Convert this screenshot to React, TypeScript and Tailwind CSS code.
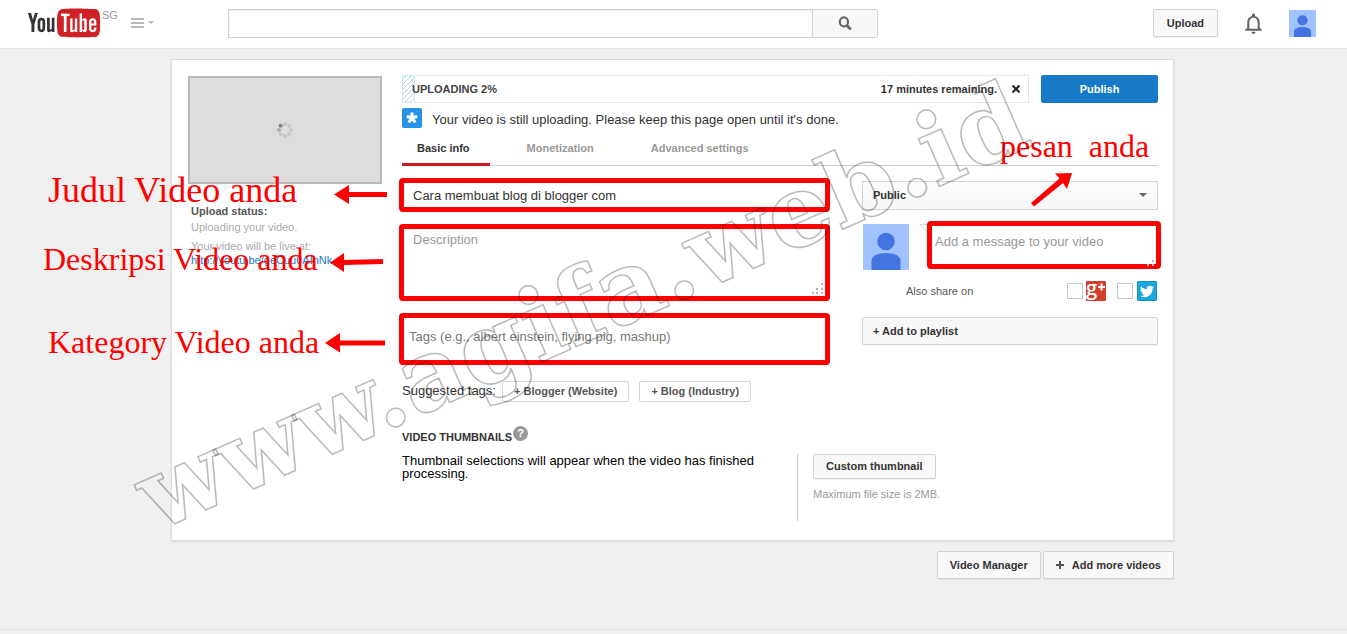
import { useState } from 'react';
import type { ReactNode } from 'react';
import { clsx } from 'clsx';
import { ImTwitter, ImYoutube2 } from 'react-icons/im';
import { MdNotificationsNone } from 'react-icons/md';

const TABS = ['Basic info', 'Monetization', 'Advanced settings'];
const SUGGESTED_TAGS = ['Blogger (Website)', 'Blog (Industry)'];

const marked =
  'outline-[5px] outline-solid outline-[#ff0000] -outline-offset-2 rounded-[1px]';

function Button({ className, children }: { className?: string; children: ReactNode }) {
  return (
    <button
      type="button"
      className={clsx(
        'flex items-center rounded-[2px] border border-[#d3d3d3] bg-[#f8f8f8]',
        'text-[11px] font-bold text-[#333] shadow-[0_1px_0_rgba(0,0,0,0.05)]',
        className,
      )}>
      {children}
    </button>
  );
}

function Avatar({ className }: { className?: string }) {
  return (
    <svg viewBox="0 0 46 46" className={className} preserveAspectRatio="none" aria-label="Avatar">
      <rect width="46" height="46" fill="#a0c2ff" />
      <circle cx="23" cy="17.500" r="8.700" fill="#4374e0" />
      <path d="M8.500 46V37c0-5.500 6.500-8 14.500-8s14.500 2.500 14.500 8v9z" fill="#4374e0" />
    </svg>
  );
}

function Grip({ small }: { small?: boolean }) {
  return (
    <svg
      viewBox="0 0 12 12"
      className="pointer-events-none absolute right-[3px] bottom-[3px] size-3"
      fill="#b5b5b5">
      {!small && (
        <>
          <rect x="9" y="0" width="2" height="2" />
          <rect x="0" y="9" width="2" height="2" />
          <rect x="4" y="5" width="2" height="2" />
        </>
      )}
      <rect x="9" y="5" width="2" height="2" />
      <rect x="4" y="9" width="2" height="2" />
      <rect x="9" y="9" width="2" height="2" />
    </svg>
  );
}

function Spinner() {
  const dots = [0, 1, 2, 3, 4, 5, 6, 7];
  return (
    <svg viewBox="-8 -8 16 16" className="size-4">
      {dots.map((i) => {
        const angle = (i * Math.PI) / 4;
        return (
          <circle
            key={i}
            cx={Math.cos(angle) * 6}
            cy={Math.sin(angle) * 6}
            r="2"
            fill={i === 5 ? '#808080' : i === 4 ? '#adadad' : '#c8c8c8'}
          />
        );
      })}
    </svg>
  );
}

function GooglePlus() {
  return (
    <svg viewBox="0 0 20 20" className="mr-[11px] size-5">
      <rect width="20" height="20" rx="1" fill="#d3402d" />
      <text x="0" y="14" fontFamily="'Open Sans', sans-serif" fontSize="20" fontWeight="600" fill="#fff">
        g
      </text>
      <path d="M12 6h7M15.500 2.500v7" stroke="#fff" strokeWidth="2" />
    </svg>
  );
}

function Header() {
  return (
    <header className="flex h-[49px] items-center border-b border-[#e6e6e6] bg-white pr-[31px] pb-[2px]">
      <div className="flex w-[228px] shrink-0 items-center pl-7">
        <a href="#" aria-label="YouTube" className="-my-5 grid">
          <ImYoutube2 className="col-start-1 row-start-1 size-[72px] text-[#333] [clip-path:inset(0_60%_0_0)]" />
          <ImYoutube2 className="col-start-1 row-start-1 size-[72px] text-[#cf2227] [clip-path:inset(0_0_0_40%)]" />
        </a>
        <span className="ml-[2px] self-start pt-[2px] text-[11px] leading-3 text-[#999]">SG</span>
        <button type="button" aria-label="Guide" className="ml-[13px]">
          <svg viewBox="0 0 24 12" className="h-3 w-6" fill="#b8b8b8">
            <path d="M0 1h13v2H0zM0 5h13v2H0zM0 9h13v2H0zM17 4h6l-3 3z" />
          </svg>
        </button>
      </div>

      <form className="flex h-[29px] max-w-[650px] flex-1">
        <input
          type="text"
          aria-label="Search"
          className="min-w-0 flex-1 border border-[#ccc] bg-white px-2 text-[13px] shadow-[inset_0_1px_2px_#eee] outline-none"
        />
        <button
          type="button"
          aria-label="Search"
          className="-ml-px flex w-[66px] items-center justify-center rounded-r-[2px] border border-[#d3d3d3] bg-[#f8f8f8]">
          <svg viewBox="0 0 13 13" className="size-[14px]" fill="none" stroke="#666">
            <ellipse cx="5.500" cy="5.500" rx="3.800" ry="4.200" strokeWidth="2" />
            <path d="M8 8.500l4 4" strokeWidth="2.600" />
          </svg>
        </button>
      </form>

      <div className="ml-auto flex items-center pl-4">
        <Button className="h-7 px-[13px]">Upload</Button>
        <button type="button" aria-label="Notifications" className="mx-[23px]">
          <MdNotificationsNone className="size-[25px] text-[#666]" />
        </button>
        <Avatar className="size-[27px]" />
      </div>
    </header>
  );
}

function UploadStatus() {
  return (
    <aside className="w-[194px] shrink-0 pt-px text-[11px] text-[#aaa]">
      <div className="flex h-[108px] items-center justify-center border-2 border-[#b9b9b9] bg-[#ddd]">
        <Spinner />
      </div>
      <div className="mt-[19px] pl-[3px]">
        <h2 className="leading-4 font-bold text-[#555]">Upload status:</h2>
        <p className="leading-4">Uploading your video.</p>
        <p className="mt-[4px] leading-[14px]">Your video will be live at:</p>
        <a href="#" className="block leading-[14px] text-[#167ac6]">
          http://youtu.be/geCuu0AInNk
        </a>
      </div>
    </aside>
  );
}

function ProgressRow() {
  return (
    <div className="flex h-7 gap-3">
      <div className="flex flex-1 items-center border border-[#e6e6e6] text-[11px] font-bold text-[#333]">
        <svg width="13" height="28" className="-my-px -ml-px shrink-0">
          <defs>
            <pattern id="hatch" width="5" height="5" patternUnits="userSpaceOnUse">
              <path d="M-1 6L6-1" stroke="#a9d5f5" />
            </pattern>
          </defs>
          <rect x="0.500" y="0.500" width="12" height="27" fill="url(#hatch)" stroke="#cfe7fa" />
        </svg>
        <span className="-ml-[3px] text-[#444]">UPLOADING 2%</span>
        <span className="ml-auto">17 minutes remaining.</span>
        <button type="button" aria-label="Cancel upload" className="mr-2 ml-[15px]">
          <svg viewBox="0 0 8 8" className="size-2" stroke="#222" strokeWidth="2">
            <path d="M0.500 0.500l7 7M7.500 0.500l-7 7" />
          </svg>
        </button>
      </div>
      <button
        type="button"
        className="w-[117px] rounded-[2px] bg-[#167ac6] text-[11px] font-bold text-white">
        Publish
      </button>
    </div>
  );
}

function Details() {
  const [title, setTitle] = useState('Cara membuat blog di blogger com');

  return (
    <div className="min-w-0 flex-1">
      <input
        type="text"
        aria-label="Title"
        value={title}
        onChange={(e) => setTitle(e.target.value)}
        className={clsx('block h-7 w-full bg-white px-[11px] text-[13px] text-[#333]', marked)}
      />
      <div className="relative mt-[18px]">
        <textarea
          aria-label="Description"
          placeholder="Description"
          className={clsx(
            'block h-[71px] w-full resize-none bg-white px-[11px] py-[5px] text-[13px] leading-4 placeholder:text-[#999]',
            marked,
          )}
        />
        <Grip />
      </div>
      <input
        type="text"
        aria-label="Tags"
        placeholder="Tags (e.g., albert einstein, flying pig, mashup)"
        className={clsx(
          'mt-[18px] block h-[46px] w-full bg-white px-[7px] pb-[5px] text-[13px] placeholder:text-[#777]',
          marked,
        )}
      />
      <div className="mt-[18px] flex h-[22px] items-center text-[13px] text-[#333]">
        <span className="mr-[6px] whitespace-nowrap">Suggested tags:</span>
        <div className="flex gap-[10px]">
          {SUGGESTED_TAGS.map((tag) => (
            <button
              key={tag}
              type="button"
              className="h-[21px] rounded-[2px] border border-[#d3d3d3] px-[11px] text-[11px] font-bold whitespace-nowrap text-[#555]">
              + {tag}
            </button>
          ))}
        </div>
      </div>
    </div>
  );
}

function Sharing() {
  return (
    <div className="w-[296px] shrink-0">
      <div className="relative">
        <select
          aria-label="Privacy"
          className="block h-[29px] w-full appearance-none border border-[#d3d3d3] bg-linear-to-b from-[#fcfcfc] to-[#f8f8f8] px-[10px] text-[11px] font-bold text-[#333]">
          <option>Public</option>
          <option>Unlisted</option>
          <option>Private</option>
        </select>
        <svg
          viewBox="0 0 8 4"
          className="pointer-events-none absolute top-3 right-[11px] h-1 w-2"
          fill="#666">
          <path d="M0 0h8L4 4z" />
        </svg>
      </div>

      <div className="mt-[14px] flex">
        <Avatar className="ml-px size-[46px] shrink-0" />
        <svg viewBox="0 0 11 11" className="ml-[10px] size-[11px] shrink-0" fill="none" stroke="#d8d8d8">
          <path d="M11 0.500H1l10 10" />
        </svg>
        <div className="relative flex-1">
          <textarea
            aria-label="Message"
            placeholder="Add a message to your video"
            className={clsx(
              'block h-[42px] w-full resize-none bg-white px-[5px] pt-[10px] text-[13px] leading-4 placeholder:text-[#999]',
              marked,
            )}
          />
          <Grip small />
        </div>
      </div>

      <div className="mt-[11px] flex h-5 items-center text-[11px] text-[#555]">
        <span className="mr-auto ml-11">Also share on</span>
        <input
          type="checkbox"
          aria-label="Share on Google+"
          className="mr-[3px] size-4 appearance-none border border-[#c6c6c6] bg-white"
        />
        <GooglePlus />
        <input
          type="checkbox"
          aria-label="Share on Twitter"
          className="mr-1 size-4 appearance-none border border-[#c6c6c6] bg-white"
        />
        <span className="mr-px flex size-5 items-center justify-center rounded-[1px] border border-[#1590c0] bg-[#1ba6de] text-white">
          <ImTwitter className="size-[14px]" />
        </span>
      </div>

      <Button className="mt-4 h-[28px] w-full px-[10px]">+ Add to playlist</Button>
    </div>
  );
}

function Thumbnails() {
  return (
    <section className="mt-6 flex">
      <div className="w-[395px] shrink-0">
        <h3 className="flex h-[15px] items-center gap-px text-[11px] font-bold text-[#333]">
          <span className="pt-[7px]">VIDEO THUMBNAILS</span>
          <button
            type="button"
            aria-label="Help"
            className="flex size-[15px] items-center justify-center rounded-full bg-[#999] text-[11px] font-bold text-white">
            ?
          </button>
        </h3>
        <p className="mt-[13px] w-[365px] text-[13px] leading-[13px] text-black">
          Thumbnail selections will appear when the video has finished processing.
        </p>
      </div>
      <div className="mt-7 h-[67px] border-l border-[#ccc] pl-[15px]">
        <Button className="h-[25px] px-3">Custom thumbnail</Button>
        <p className="mt-2 text-[11px] leading-[14px] text-[#999]">Maximum file size is 2MB.</p>
      </div>
    </section>
  );
}

function Notes() {
  return (
    <svg
      width="1347"
      height="634"
      viewBox="0 0 1347 634"
      className="pointer-events-none absolute top-0 left-0"
      fill="#ff0000">
      <g fontFamily="'Liberation Serif', serif" fontSize="32">
        <text x="48" y="202" fontSize="36">Judul Video anda</text>
        <text x="43" y="270">Deskripsi Video anda</text>
        <text x="48" y="353">Kategory Video anda</text>
        <text x="1000" y="157">pesan&#160; anda</text>
      </g>
      <path d="M334 194.500L349 185v7h38v5h-38v7z" />
      <path d="M330 262.500L344 253v7l39-1v5l-39 1v7z" />
      <path d="M325 343L340 333v7.500h45v5h-45v7z" />
      <path d="M1072 173l-17 0.500 4.500 5L1031 203l3 3.500L1063 183l4 6z" />
    </svg>
  );
}

function Watermark() {
  return (
    <svg
      width="1347"
      height="634"
      viewBox="0 0 1347 634"
      className="pointer-events-none absolute top-0 left-0">
      <text
        transform="translate(156 532) rotate(-23.800)"
        fontFamily="'DejaVu Serif', serif"
        fontWeight="bold"
        fontSize="100"
        fill="none"
        stroke="#000"
        strokeOpacity="0.270"
        strokeWidth="1.600">
        www.agifa.web.id
      </text>
    </svg>
  );
}

export default function App() {
  const [tab, setTab] = useState(TABS[0]);

  return (
    <div className="relative min-h-screen overflow-hidden bg-[#f0f0f0] font-['Liberation_Sans',Arial,sans-serif]">
      <Header />

      <main className="border-b border-[#e2e2e2] pt-[10px] pb-[50px]">
        <div className="mx-auto max-w-[1005px] pr-[2px]">
          <div className="flex gap-5 border border-[#dcdcdc] bg-white pt-[15px] pr-[15px] pb-[19px] pl-4 shadow-[0_1px_2px_rgba(0,0,0,0.1)]">
            <UploadStatus />

            <div className="min-w-0 flex-1">
              <ProgressRow />

              <div className="mt-[5px] flex h-5 items-center gap-[10px] text-[13px] text-[#333]">
                <span className="flex size-5 items-center justify-center rounded-[2px] bg-[#2793e6]">
                  <svg viewBox="0 0 12 12" className="size-3" stroke="#fff" strokeWidth="3">
                    <path d="M6 6V0.500M6 6l5.200-1.700M6 6l3.200 4.500M6 6l-3.200 4.500M6 6L0.800 4.300" />
                  </svg>
                </span>
                <p className="pt-[3px]">
                  Your video is still uploading. Please keep this page open until it&apos;s done.
                </p>
              </div>

              <nav className="mt-[5px] flex h-[33px] gap-[22px] border-b border-[#ccc]">
                {TABS.map((name) => (
                  <button
                    key={name}
                    type="button"
                    onClick={() => setTab(name)}
                    className={clsx(
                      '-mb-px border-b-[3px] pr-5 pl-[15px] text-[11px] font-bold',
                      name === tab
                        ? 'border-[#cc181e] text-[#333]'
                        : 'border-transparent text-[#999]',
                    )}>
                    {name}
                  </button>
                ))}
              </nav>

              <div className="mt-[15px] flex gap-[35px]">
                <Details />
                <Sharing />
              </div>

              <Thumbnails />
            </div>
          </div>

          <div className="mt-[10px] flex justify-end gap-[2px]">
            <Button className="h-7 px-3">Video Manager</Button>
            <Button className="h-7 gap-2 px-3">
              <svg viewBox="0 0 8 8" className="size-2" fill="#555">
                <path d="M3 0h2v3h3v2H5v3H3V5H0V3h3z" />
              </svg>
              Add more videos
            </Button>
          </div>
        </div>
      </main>

      <Notes />
      <Watermark />
    </div>
  );
}
